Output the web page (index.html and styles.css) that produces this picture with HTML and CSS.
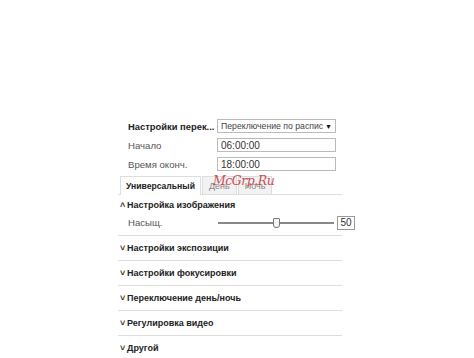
FILE: index.html
```html
<!DOCTYPE html>
<html lang="ru">
<head>
    <meta charset="UTF-8">
    <title>Изображение</title>
    <link rel="stylesheet" href="styles.css">
</head>
<body>
    <div class="panel">
        <div class="form-row">
            <label class="form-row__label form-row__label--bold">Настройки перек...</label>
            <div class="select">
                <span class="select__text">Переключение по распис</span>
                <span class="select__arrow">&#9660;</span>
            </div>
        </div>
        <div class="form-row">
            <label class="form-row__label">Начало</label>
            <div class="field">06:00:00</div>
        </div>
        <div class="form-row">
            <label class="form-row__label">Время оконч.</label>
            <div class="field">18:00:00</div>
        </div>

        <ul class="tabs">
            <li class="tabs__item tabs__item--active">Универсальный</li>
            <li class="tabs__item">День</li>
            <li class="tabs__item">Ночь</li>
        </ul>

        <section class="section section--open">
            <h3 class="section__title"><span class="section__icon">&#708;</span>Настройка изображения</h3>
            <div class="slider-row">
                <span class="slider-row__label">Насыщ.</span>
                <div class="slider">
                    <span class="slider__track"></span>
                    <span class="slider__thumb"></span>
                </div>
                <span class="slider-row__value">50</span>
            </div>
        </section>
        <section class="section">
            <h3 class="section__title"><span class="section__icon">&#709;</span>Настройки экспозиции</h3>
        </section>
        <section class="section">
            <h3 class="section__title"><span class="section__icon">&#709;</span>Настройки фокусировки</h3>
        </section>
        <section class="section">
            <h3 class="section__title"><span class="section__icon">&#709;</span>Переключение день/ночь</h3>
        </section>
        <section class="section">
            <h3 class="section__title"><span class="section__icon">&#709;</span>Регулировка видео</h3>
        </section>
        <section class="section section--last">
            <h3 class="section__title"><span class="section__icon">&#709;</span>Другой</h3>
        </section>

        <span class="watermark">McGrp.Ru</span>
    </div>
</body>
</html>
```

FILE: styles.css
```css
body {
    margin: 0;
    background: #fff;
    color: #333;
    font-family: "Liberation Sans", Arial, sans-serif;
    font-size: 10px;
}

.panel {
    position: relative;
    width: 224px;
    margin: 119px 0 0 118px;
    white-space: nowrap;
}

.form-row {
    display: flex;
    align-items: center;
    height: 14px;
    margin-bottom: 5px;
    padding-left: 10px;
}

.form-row__label {
    flex-shrink: 0;
    width: 89px;
    color: #555;
    font-size: 9.6px;
}

.form-row__label--bold {
    font-size: 9.4px;
    font-weight: 700;
    color: #222;
}

.select,
.field {
    box-sizing: border-box;
    display: flex;
    align-items: center;
    flex-shrink: 0;
    width: 119px;
    height: 14px;
    padding: 0 3px;
    border: 1px solid #bbb;
    color: #333;
}

.select {
    justify-content: space-between;
}

.select__text {
    overflow: hidden;
    font-size: 8.7px;
    color: #444;
}

.select__arrow {
    margin-left: 2px;
    font-size: 7px;
    color: #111;
}

.tabs {
    display: flex;
    list-style: none;
    margin: 0;
    padding: 0 0 0 2px;
    height: 18px;
    border-bottom: 1px solid #ddd;
}

.tabs__item {
    display: flex;
    align-items: center;
    padding: 0 6px;
    margin-right: 1px;
    border: 1px solid #ddd;
    border-bottom: none;
    background: #f2f2f2;
    color: #888;
    font-size: 9px;
}

.tabs__item--active {
    padding: 0 5px;
    background: #fff;
    color: #222;
    font-size: 8.6px;
    font-weight: 700;
    margin-bottom: -1px;
}

.section {
    border-bottom: 1px solid #ddd;
}

.section--last {
    border-bottom: none;
}

.section__title {
    display: flex;
    align-items: center;
    margin: 0;
    height: 24px;
    padding-left: 2px;
    font-size: 9px;
    font-weight: 700;
    color: #222;
}

.section--open .section__title {
    height: 19px;
}

.section__icon {
    width: 7px;
    font-size: 9px;
    color: #333;
}

.slider-row {
    display: flex;
    align-items: center;
    height: 17px;
    padding: 0 0 4px 10px;
}

.slider-row__label {
    width: 90px;
    color: #555;
    font-size: 9.6px;
}

.slider {
    position: relative;
    width: 116px;
    height: 10px;
}

.slider__track {
    position: absolute;
    left: 0;
    right: 0;
    top: 4px;
    height: 2px;
    background: #888;
}

.slider__thumb {
    position: absolute;
    left: 55px;
    top: 0;
    width: 5px;
    height: 8px;
    border: 1px solid #777;
    border-radius: 1px 1px 3px 3px;
    background: #f4f4f4;
}

.slider-row__value {
    box-sizing: border-box;
    width: 18px;
    height: 14px;
    margin-left: 3px;
    margin-right: -13px;
    border: 1px solid #999;
    font-size: 10px;
    text-align: center;
    line-height: 12px;
}

.watermark {
    position: absolute;
    left: 95px;
    top: 54px;
    color: #c1272d;
    font-family: "DejaVu Serif", serif;
    font-style: italic;
    font-size: 12.5px;
    letter-spacing: -0.5px;
    opacity: 0.8;
}
```
